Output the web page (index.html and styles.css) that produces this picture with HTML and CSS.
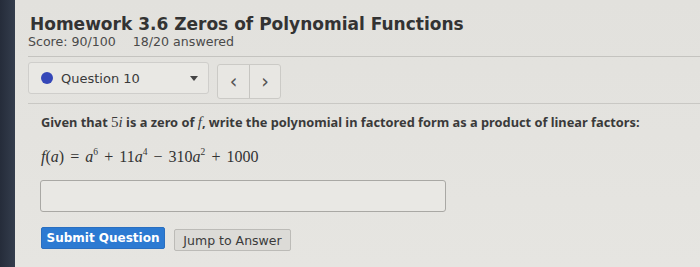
FILE: index.html
```html
<!DOCTYPE html>
<html>
<head>
<meta charset="utf-8">
<link rel="stylesheet" href="styles.css">
</head>
<body>
<div class="screen">
  <div class="bezel"></div>
  <main class="page">
    <header class="head">
      <h1 class="title">Homework 3.6 Zeros of Polynomial Functions</h1>
      <div class="score"><span>Score: 90/100</span><span>18/20 answered</span></div>
    </header>
    <div class="qbar">
      <div class="dropdown">
        <span class="dot"></span>
        <span class="qlabel">Question 10</span>
        <span class="caret"></span>
      </div>
      <div class="nav">
        <span class="navbtn">&lsaquo;</span>
        <span class="navbtn">&rsaquo;</span>
      </div>
    </div>
    <section class="question">
      <p class="prompt">Given that <span class="m">5<i>i</i></span> is a zero of <span class="m"><i>f</i></span>, write the polynomial in factored form as a product of linear factors:</p>
      <p class="formula"><i>f</i>(<i>a</i>)<span class="op">=</span><i>a</i><sup>6</sup><span class="op">+</span>11<i>a</i><sup>4</sup><span class="op">&minus;</span>310<i>a</i><sup>2</sup><span class="op">+</span>1000</p>
      <div class="answer"></div>
      <div class="actions">
        <button class="btn primary">Submit Question</button>
        <button class="btn secondary">Jump to Answer</button>
      </div>
    </section>
  </main>
</div>
</body>
</html>
```
FILE: styles.css
```css
html, body {
  margin: 0;
  padding: 0;
  width: 700px;
  height: 267px;
  overflow: hidden;
  background: #e4e3df;
}
.screen {
  display: flex;
  height: 267px;
}
.bezel {
  width: 15px;
  flex: none;
  background: linear-gradient(90deg, #252c3a, #343d4d);
}
.page {
  flex: 1;
  padding-left: 13px;
  font-family: "DejaVu Sans", "Noto Sans", sans-serif;
  color: #383838;
  background: linear-gradient(180deg, #e2e1dd, #e6e5e1);
}
.head {
  padding-top: 14px;
  padding-bottom: 6px;
  border-bottom: 1px solid #c4c3bf;
}
.title {
  margin: 0 0 0 2px;
  font-size: 17px;
  line-height: 20px;
  font-weight: bold;
  color: #333;
}
.score {
  display: flex;
  gap: 17px;
  font-size: 12.6px;
  line-height: 16px;
  color: #4a4a4a;
}
.qbar {
  display: flex;
  gap: 8px;
  padding: 5px 0 4px 0;
  border-bottom: 1px solid #c9c8c4;
}
.dropdown {
  width: 181px;
  height: 32px;
  border: 1px solid #cfcecb;
  border-radius: 3px;
  background: #e9e8e4;
  display: flex;
  align-items: center;
  padding-left: 12px;
  box-sizing: border-box;
}
.dot {
  width: 12px;
  height: 12px;
  border-radius: 50%;
  background: #3547b8;
  flex: none;
}
.qlabel {
  margin-left: 8px;
  font-size: 13px;
  color: #3a3a3a;
  flex: 1;
}
.caret {
  width: 0;
  height: 0;
  border-left: 4px solid transparent;
  border-right: 4px solid transparent;
  border-top: 5px solid #444;
  margin-right: 10px;
}
.nav {
  display: flex;
  margin-top: 2px;
  height: 33px;
  border: 1px solid #cbcac6;
  border-radius: 3px;
  background: #e8e7e3;
}
.navbtn {
  width: 31px;
  display: flex;
  align-items: center;
  justify-content: center;
  font-size: 19px;
  color: #555;
  padding-bottom: 2px;
  box-sizing: border-box;
}
.navbtn + .navbtn {
  border-left: 1px solid #c6c5c1;
}
.question {
  padding: 10px 0 0 13px;
}
.prompt {
  margin: 0;
  font-family: "Noto Sans", "DejaVu Sans", sans-serif;
  font-size: 12.8px;
  line-height: 16px;
  font-weight: bold;
  color: #3a3a3a;
}
.m {
  font-family: "Liberation Serif", serif;
  font-weight: normal;
  font-size: 15px;
}
.formula {
  margin: 12px 0 0 0;
  font-family: "Liberation Serif", serif;
  font-size: 16px;
  line-height: 20px;
  color: #333;
}
.op {
  margin: 0 0.38em;
}
.formula sup {
  font-size: 9.5px;
  vertical-align: 7px;
}
.answer {
  margin-top: 13px;
  margin-left: -1px;
  width: 406px;
  height: 32px;
  box-sizing: border-box;
  border: 1px solid #a9a8a4;
  border-radius: 3px;
  background: #e9e8e4;
}
.actions {
  display: flex;
  align-items: flex-start;
  gap: 9px;
  margin-top: 15px;
}
.btn {
  font-family: "DejaVu Sans", "Noto Sans", sans-serif;
  font-size: 12.5px;
  height: 22px;
  padding: 0;
  border-radius: 2px;
  box-sizing: border-box;
  white-space: nowrap;
}
.primary {
  background: #2c7ad2;
  color: #fff;
  font-weight: bold;
  border: 1px solid #2a6fc0;
  width: 124px;
  font-size: 12px;
}
.secondary {
  margin-top: 2px;
  background: #dcdbd7;
  color: #3a3a3a;
  border: 1px solid #bcbbb7;
  width: 117px;
}
```
